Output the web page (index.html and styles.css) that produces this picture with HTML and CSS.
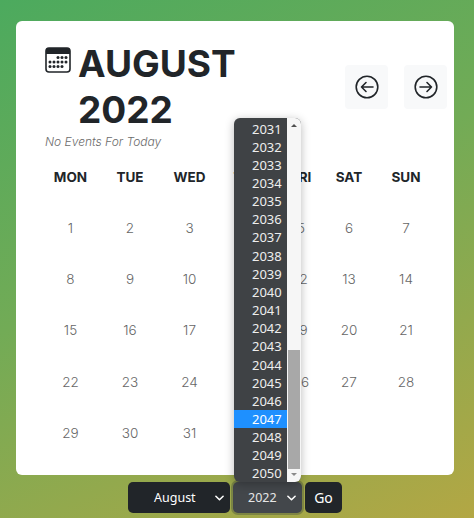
FILE: index.html
```html
<!DOCTYPE html>
<html lang="en">
<head>
    <meta charset="UTF-8">
    <title>Calendar</title>
    <link rel="stylesheet" href="styles.css">
</head>
<body>

    <!-- Calendar card -->
    <div class="card">
        <div class="cal-header">
            <svg class="cal-icon" viewBox="0 0 26 26">
                <rect x="1" y="1" width="24" height="24" rx="3" fill="#fff" stroke="#212529" stroke-width="1.6"/>
                <path d="M1 7V4a3 3 0 0 1 3-3h18a3 3 0 0 1 3 3v3z" fill="#212529"/>
                <g fill="#212529">
                    <circle cx="13" cy="10.5" r="1.5"/><circle cx="17" cy="10.5" r="1.5"/><circle cx="21" cy="10.5" r="1.5"/>
                    <circle cx="5" cy="15" r="1.5"/><circle cx="9" cy="15" r="1.5"/><circle cx="13" cy="15" r="1.5"/><circle cx="17" cy="15" r="1.5"/><circle cx="21" cy="15" r="1.5"/>
                    <circle cx="5" cy="19.5" r="1.5"/><circle cx="9" cy="19.5" r="1.5"/><circle cx="13" cy="19.5" r="1.5"/><circle cx="17" cy="19.5" r="1.5"/>
                </g>
            </svg>
            <h1 class="cal-title">AUGUST 2022</h1>
            <div class="cal-nav">
                <button class="nav-btn">
                    <svg viewBox="0 0 24 24" width="24" height="24" fill="none" stroke="#212529" stroke-width="1.6" stroke-linecap="round" stroke-linejoin="round">
                        <circle cx="12" cy="12" r="10.8"/>
                        <path d="M18 12H6.500M11 7.500 6.500 12l4.500 4.500"/>
                    </svg>
                </button>
                <button class="nav-btn">
                    <svg viewBox="0 0 24 24" width="24" height="24" fill="none" stroke="#212529" stroke-width="1.6" stroke-linecap="round" stroke-linejoin="round">
                        <circle cx="12" cy="12" r="10.8"/>
                        <path d="M6 12h11.500M13 7.500l4.500 4.500-4.500 4.500"/>
                    </svg>
                </button>
            </div>
        </div>
        <p class="cal-note">No Events For Today</p>

        <div class="cal-grid">
            <div class="day-name">MON</div><div class="day-name">TUE</div><div class="day-name">WED</div><div class="day-name">THU</div><div class="day-name">FRI</div><div class="day-name">SAT</div><div class="day-name">SUN</div>
            <div class="day">1</div><div class="day">2</div><div class="day">3</div><div class="day">4</div><div class="day">5</div><div class="day">6</div><div class="day">7</div>
            <div class="day">8</div><div class="day">9</div><div class="day">10</div><div class="day">11</div><div class="day">12</div><div class="day">13</div><div class="day">14</div>
            <div class="day">15</div><div class="day">16</div><div class="day">17</div><div class="day">18</div><div class="day">19</div><div class="day">20</div><div class="day">21</div>
            <div class="day">22</div><div class="day">23</div><div class="day">24</div><div class="day">25</div><div class="day">26</div><div class="day">27</div><div class="day">28</div>
            <div class="day">29</div><div class="day">30</div><div class="day">31</div>
        </div>
    </div>

    <!-- Month / year picker -->
    <div class="picker">
        <div class="picker-select month-select">
            <span>August</span>
            <svg class="chevron" viewBox="0 0 10 6"><path d="M1 1l4 4 4-4" fill="none" stroke="#fff" stroke-width="1.700" stroke-linecap="round" stroke-linejoin="round"/></svg>
        </div>
        <div class="picker-select year-select">
            <span>2022</span>
            <svg class="chevron" viewBox="0 0 10 6"><path d="M1 1l4 4 4-4" fill="none" stroke="#fff" stroke-width="1.700" stroke-linecap="round" stroke-linejoin="round"/></svg>
        </div>
        <button class="go-btn">Go</button>
    </div>

    <!-- Open year dropdown -->
    <div class="year-list">
        <ul class="year-options">
            <li>2031</li><li>2032</li><li>2033</li><li>2034</li><li>2035</li>
            <li>2036</li><li>2037</li><li>2038</li><li>2039</li><li>2040</li>
            <li>2041</li><li>2042</li><li>2043</li><li>2044</li><li>2045</li>
            <li>2046</li><li class="selected">2047</li><li>2048</li><li>2049</li><li>2050</li>
        </ul>
        <div class="scrollbar">
            <span class="arrow-up"></span>
            <span class="thumb"></span>
            <span class="arrow-down"></span>
        </div>
    </div>

</body>
</html>
```

FILE: styles.css
```css
* {
    box-sizing: border-box;
}

body {
    margin: 0;
    height: 518px;
    overflow: hidden;
    position: relative;
    font-family: Inter, "Liberation Sans", sans-serif;
    background: linear-gradient(155deg, #4caa5e 0%, #72ab56 45%, #b3a744 100%);
}

/* --- Card --- */
.card {
    width: 438px;
    height: 454px;
    margin: 21px 0 0 16px;
    padding: 20px 7px 0 29px;
    background-color: #fff;
    border-radius: 6px;
    float: left;
}

.cal-header {
    display: flex;
    align-items: flex-start;
}

.cal-icon {
    width: 26px;
    height: 26px;
    margin-top: 6px;
    flex: none;
}

.cal-title {
    width: 180px;
    margin: 0 0 0 7px;
    font-size: 37px;
    font-weight: 700;
    line-height: 45.600px;
    color: #212529;
}

.cal-nav {
    display: flex;
    gap: 16px;
    margin: 24px 0 0 87px;
}

.nav-btn {
    width: 43px;
    height: 44px;
    padding: 0;
    border: none;
    border-radius: 4px;
    background-color: #f8f9fa;
    display: flex;
    align-items: center;
    justify-content: center;
}

.cal-note {
    margin: 0;
    font-size: 12px;
    font-weight: 300;
    font-style: italic;
    line-height: 20px;
    color: #6c6c6c;
}

/* --- Grid --- */
.cal-grid {
    display: grid;
    grid-template-columns: 59px 60px 59px 58px 48px 48px 66px;
    grid-auto-rows: 51.200px;
    margin: -1px 0 0 -4px;
}

.day-name,
.day {
    display: flex;
    align-items: center;
    justify-content: center;
}

.day-name {
    font-size: 13.500px;
    font-weight: 700;
    color: #212529;
}

.day {
    font-size: 13.500px;
    font-weight: 300;
    color: #666;
}

/* --- Picker --- */
.picker {
    position: absolute;
    top: 482px;
    left: 128px;
    display: flex;
    gap: 3px;
    font-family: "Noto Sans", sans-serif;
    font-size: 12.500px;
    color: #fff;
}

.picker-select {
    height: 31px;
    border-radius: 5px;
    display: flex;
    align-items: center;
    position: relative;
}

.month-select {
    width: 102px;
    padding-left: 26px;
    background-color: #212529;
}

.year-select {
    width: 69px;
    padding-left: 15px;
    background-color: #43474b;
    color: #e6e6e6;
    box-shadow: 0 0 0 2px rgba(70, 80, 60, 0.4);
}

.chevron {
    position: absolute;
    right: 6px;
    top: 13px;
    width: 9px;
    height: 6px;
}

.go-btn {
    width: 37px;
    height: 31px;
    padding: 0;
    border: none;
    border-radius: 5px;
    background-color: #212529;
    color: #fff;
    font-family: inherit;
    font-size: 14px;
}

/* --- Open dropdown --- */
.year-list {
    position: absolute;
    top: 118px;
    left: 234px;
    width: 67px;
    height: 364px;
    display: flex;
    border-radius: 6px;
    overflow: hidden;
    background-color: #3f4245;
    box-shadow: 0 2px 10px rgba(0, 0, 0, 0.28);
    font-family: "Noto Sans", sans-serif;
}

.year-options {
    width: 53px;
    margin: 0;
    padding: 1.500px 0 0;
    list-style: none;
    font-size: 13px;
    color: #eee;
}

.year-options li {
    height: 18.160px;
    line-height: 18.160px;
    padding-left: 18px;
}

.year-options .selected {
    background-color: #1e90ff;
    color: #fff;
}

.scrollbar {
    width: 14px;
    position: relative;
    background-color: #f6f6f6;
}

.thumb {
    position: absolute;
    top: 232px;
    left: 1px;
    width: 12px;
    height: 119px;
    background-color: #a8a8a8;
}

.arrow-up,
.arrow-down {
    position: absolute;
    left: 4px;
    border-left: 3px solid transparent;
    border-right: 3px solid transparent;
}

.arrow-up {
    top: 6px;
    border-bottom: 3px solid #505050;
}

.arrow-down {
    bottom: 6px;
    border-top: 3px solid #8a8a8a;
}
```
